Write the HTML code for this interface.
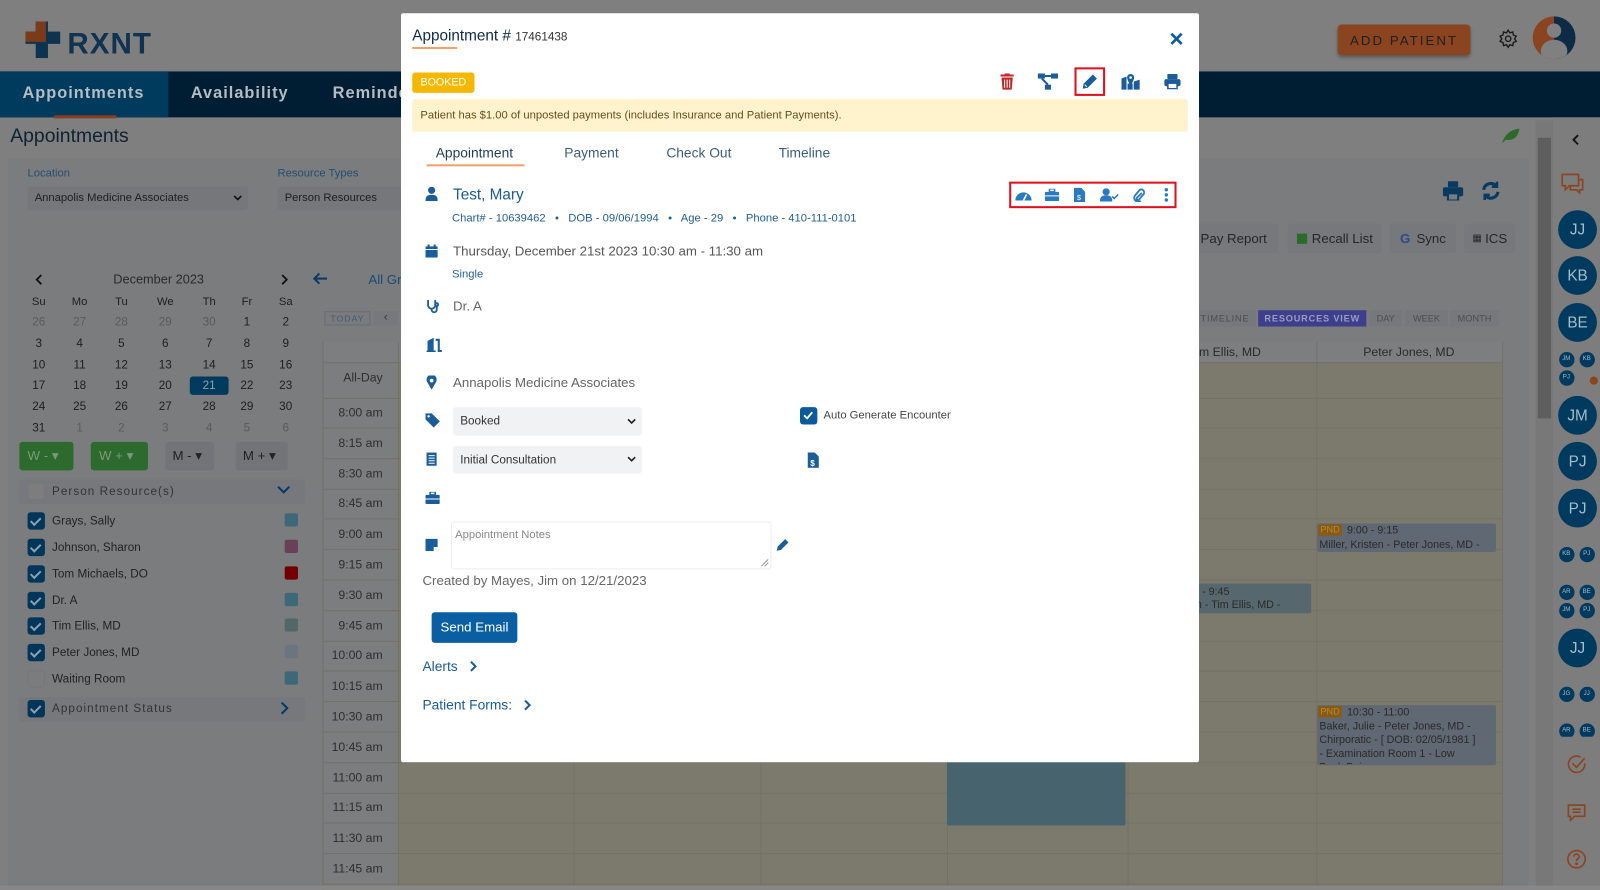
<!DOCTYPE html>
<html><head><meta charset="utf-8">
<style>
*{box-sizing:border-box;margin:0;padding:0}
html,body{width:1600px;height:890px;overflow:hidden;background:#808080;font-family:"Liberation Sans",sans-serif}
#w{position:absolute;left:0;top:0;width:1568px;height:872px;transform:scale(1.020408);transform-origin:0 0;background:#7f7f7f;overflow:hidden}
.a{position:absolute;white-space:nowrap}
.t{position:absolute;white-space:nowrap;transform:translateY(-50%)}
.hl{position:absolute;height:1px;background:#727268}
.vl{position:absolute;width:1px;background:#727268}
.cb{position:absolute;width:17px;height:17px;border-radius:3px;background:#00365a}
.cb:after{content:"";position:absolute;left:5px;top:3px;width:4px;height:8px;border:solid #8aa0b0;border-width:0 2px 2px 0;transform:rotate(45deg)}
.sq{position:absolute;width:13px;height:13px;border-radius:2px;left:279px}
.av{position:absolute;border-radius:50%;background:#003a5e;color:#a8bccb;display:flex;align-items:center;justify-content:center;font-size:15px}
.sav{position:absolute;width:15px;height:15px;border-radius:50%;background:#003a5e;color:#a8bccb;font-size:6px;display:flex;align-items:center;justify-content:center}
.gbtn{position:absolute;background:#76787b;border-radius:3px;color:#262626;font-size:13px;display:flex;align-items:center;justify-content:center}
.mi{position:absolute;transform:translate(-50%,-50%)}
</style></head><body><div id="w">

<svg class="a" style="left:25px;top:21px" width="36" height="36" viewBox="0 0 36 36"><rect x="10" y="0" width="12" height="36" fill="#0e3350"/><rect x="0" y="10" width="34" height="12" fill="#0e3350"/><rect x="10" y="0" width="10" height="20" fill="#7a3b1a"/><rect x="0" y="10" width="20" height="10" fill="#7a3b1a"/></svg>
<div class="t" style="left:66px;top:44px;font-size:29px;font-weight:bold;color:#0f3350;letter-spacing:1px">RXNT</div>
<div class="a" style="left:1311px;top:24px;width:130px;height:30px;background:#8a4420;border-radius:4px;color:#202020;font-size:13px;letter-spacing:2px;display:flex;align-items:center;justify-content:center;box-shadow:0 2px 3px rgba(0,0,0,.3)">ADD PATIENT</div>
<svg class="mi" style="left:1478px;top:38px" width="20" height="20" viewBox="0 0 24 24" fill="none" stroke="#1a1a1a" stroke-width="1.6"><circle cx="12" cy="12" r="3.2"/><path d="M12 2l2 3 3.5-1 .5 3.5 3.5 1.5-2 3 2 3-3.5 1.5-.5 3.5-3.5-1-2 3-2-3-3.5 1-.5-3.5L2.5 15l2-3-2-3L6 7.5 6.5 4 10 5z"/></svg>
<div class="a" style="left:1502px;top:16px;width:42px;height:42px;border-radius:50%;background:linear-gradient(90deg,#8a4420 50%,#0e2a45 50%);overflow:hidden"><div class="a" style="left:14px;top:7px;width:14px;height:14px;border-radius:50%;background:#808080"></div><div class="a" style="left:8px;top:23px;width:26px;height:22px;border-radius:50%;background:#808080"></div></div>

<div class="a" style="left:0;top:70px;width:1568px;height:45px;background:#001e33"></div>
<div class="a" style="left:0;top:70px;width:165px;height:45px;background:#003a5c"></div>
<div class="a" style="left:53px;top:113px;width:61px;height:3px;background:#8a4020"></div>
<div class="t" style="left:22px;top:92px;font-size:16px;font-weight:bold;color:#b5bcc2;letter-spacing:1px">Appointments</div>
<div class="t" style="left:187px;top:92px;font-size:16px;font-weight:bold;color:#b5bcc2;letter-spacing:1px">Availability</div>
<div class="t" style="left:326px;top:92px;font-size:16px;font-weight:bold;color:#b5bcc2;letter-spacing:1px">Reminders</div>

<div class="t" style="left:10px;top:134px;font-size:19px;color:#0f2233">Appointments</div>
<div class="a" style="left:8px;top:155px;width:1490px;height:720px;background:#7b7c7e"></div>

<div class="t" style="left:27px;top:170px;font-size:11px;color:#234e70">Location</div>
<div class="a" style="left:27px;top:183px;width:216px;height:23px;background:#75777a;border-radius:3px"></div>
<div class="t" style="left:34px;top:194px;font-size:11px;color:#1e1e1e">Annapolis Medicine Associates</div>
<svg class="mi" style="left:233px;top:194px" width="9" height="6" viewBox="0 0 9 6" fill="none" stroke="#111" stroke-width="1.6"><path d="M1 1l3.5 3.5L8 1"/></svg>
<div class="t" style="left:272px;top:170px;font-size:11px;color:#234e70">Resource Types</div>
<div class="a" style="left:272px;top:183px;width:130px;height:23px;background:#75777a;border-radius:3px"></div>
<div class="t" style="left:279px;top:194px;font-size:11px;color:#1e1e1e">Person Resources</div>

<svg class="mi" style="left:38px;top:274px" width="7" height="11" viewBox="0 0 7 11" fill="none" stroke="#111" stroke-width="1.8"><path d="M6 1L1.5 5.5 6 10"/></svg>
<svg class="mi" style="left:279px;top:274px" width="7" height="11" viewBox="0 0 7 11" fill="none" stroke="#111" stroke-width="1.8"><path d="M1 1l4.5 4.5L1 10"/></svg>
<div class="t" style="left:111px;top:274px;font-size:12.5px;color:#2a2a2a">December 2023</div>
<div class="a" style="left:186px;top:369px;width:38px;height:18px;background:#003a5c;border-radius:3px"></div>
<div id="cal"></div>

<div class="a" style="left:19px;top:433px;width:53px;height:28px;background:#2d6a2d;border-radius:3px;color:#7a9a7a;font-size:13px;padding:6px 8px">W - ▾</div>
<div class="a" style="left:89px;top:433px;width:56px;height:28px;background:#2d6a2d;border-radius:3px;color:#7a9a7a;font-size:13px;padding:6px 8px">W + ▾</div>
<div class="a" style="left:162px;top:433px;width:48px;height:28px;background:#727477;border-radius:3px;color:#222;font-size:13px;padding:6px 7px">M - ▾</div>
<div class="a" style="left:231px;top:433px;width:51px;height:28px;background:#727477;border-radius:3px;color:#222;font-size:13px;padding:6px 7px">M + ▾</div>

<div class="a" style="left:19px;top:470px;width:280px;height:24px;background:#76787b;border-radius:3px"></div>
<div class="a" style="left:27px;top:473px;width:17px;height:17px;border:1px solid #777;border-radius:3px;background:#7d7d7d"></div>
<div class="t" style="left:51px;top:482px;font-size:11.5px;color:#333;letter-spacing:1px">Person Resource(s)</div>
<svg class="mi" style="left:278px;top:480px" width="13" height="8" viewBox="0 0 13 8" fill="none" stroke="#003a6a" stroke-width="2"><path d="M1 1l5.5 5.5L12 1"/></svg>
<div id="res"></div>
<div class="a" style="left:19px;top:683px;width:280px;height:24px;background:#76787b;border-radius:3px"></div>
<div class="cb" style="left:27px;top:686px"></div>
<div class="t" style="left:51px;top:695px;font-size:11.5px;color:#333;letter-spacing:1px">Appointment Status</div>
<svg class="mi" style="left:279px;top:694px" width="8" height="13" viewBox="0 0 8 13" fill="none" stroke="#003a6a" stroke-width="2"><path d="M1 1l5.5 5.5L1 12"/></svg>

<svg class="mi" style="left:314px;top:273px" width="15" height="12" viewBox="0 0 15 12" fill="none" stroke="#0e3a66" stroke-width="2"><path d="M14 6H2M6.5 1L1.5 6l5 5"/></svg>
<div class="t" style="left:361px;top:274px;font-size:13px;color:#1a4a78">All Groups</div>
<div class="a" style="left:318px;top:305px;width:45px;height:14px;border:1px solid #6a6c70;background:#797b7e;color:#425a70;font-size:8.5px;letter-spacing:1px;text-align:center;line-height:12px">TODAY</div>
<div class="a" style="left:366px;top:305px;width:24px;height:14px;background:#76787b;color:#333;font-size:11px;text-align:center;line-height:13px">‹</div>
<div class="a" style="left:316px;top:335px;width:1156px;height:540px;background:#7c7a6c"></div>
<div class="a" style="left:316px;top:335px;width:74px;height:540px;background:#7c7d7f"></div>
<div class="a" style="left:316px;top:335px;width:1156px;height:20px;background:#7d7e80"></div>
<div id="grid"></div>
<div class="t" style="left:1175px;top:345px;font-size:12px;color:#2a2a2a">m Ellis, MD</div>
<div class="t" style="left:1336px;top:345px;font-size:12px;color:#2a2a2a">Peter Jones, MD</div>

<div class="a" style="left:1291px;top:513px;width:175px;height:28px;background:#5f6873;border-radius:2px"></div>
<div class="a" style="left:1292px;top:514px;width:23px;height:11px;background:#8a5a10;color:#b08a40;font-size:9px;line-height:11px;text-align:center">PND</div>
<div class="t" style="left:1320px;top:520px;font-size:10.5px;color:#2a2a2a">9:00 - 9:15</div>
<div class="t" style="left:1293px;top:534px;font-size:10.5px;color:#2a2a2a">Miller, Kristen - Peter Jones, MD -</div>
<div class="a" style="left:1170px;top:572px;width:115px;height:29px;background:#56676e;border-radius:2px"></div>
<div class="t" style="left:1178px;top:580px;font-size:10.5px;color:#2a2a2a">- 9:45</div>
<div class="t" style="left:1172px;top:593px;font-size:10.5px;color:#2a2a2a">n - Tim Ellis, MD -</div>
<div class="a" style="left:1291px;top:691px;width:175px;height:59px;background:#5f6873;border-radius:2px;overflow:hidden"></div>
<div class="a" style="left:1292px;top:692px;width:23px;height:11px;background:#8a5a10;color:#b08a40;font-size:9px;line-height:11px;text-align:center">PND</div>
<div class="t" style="left:1320px;top:698px;font-size:10.5px;color:#2a2a2a">10:30 - 11:00</div>
<div class="a" style="left:1293px;top:706px;font-size:10.5px;line-height:13.3px;color:#2a2a2a;height:43px;overflow:hidden">Baker, Julie - Peter Jones, MD -<br>Chirporatic - [ DOB: 02/05/1981 ]<br>- Examination Room 1 - Low<br>Back Pain</div>
<div class="a" style="left:928px;top:740px;width:175px;height:69px;background:#46636e;border-radius:2px"></div>

<svg class="mi" style="left:1424px;top:187px" width="20" height="19" viewBox="0 0 20 19" fill="#0a3a60"><rect x="5" y="0" width="10" height="6" rx="1"/><rect x="0" y="6" width="20" height="9" rx="2"/><rect x="5" y="12" width="10" height="7" fill="#7b7c7e" stroke="#0a3a60" stroke-width="2"/></svg>
<svg class="mi" style="left:1461px;top:187px" width="20" height="20" viewBox="0 0 20 20" fill="none" stroke="#0a3a60" stroke-width="3"><path d="M3 9a7 7 0 0 1 12-4M17 11a7 7 0 0 1-12 4"/><path d="M16 1v5h-5M4 19v-5h5" stroke-width="2.5"/></svg>
<svg class="mi" style="left:1480px;top:133px" width="20" height="16" viewBox="0 0 20 16"><path d="M2 15C5 6 11 2 19 1c-1 8-6 12-13 11z" fill="#2a6a2a"/></svg>
<div class="gbtn" style="left:1165px;top:219px;width:88px;height:29px">Pay Report</div>
<div class="gbtn" style="left:1262px;top:219px;width:92px;height:29px"><span style="display:inline-block;width:10px;height:10px;background:#2a6a2a;margin-right:5px"></span>Recall List</div>
<div class="gbtn" style="left:1362px;top:219px;width:65px;height:29px"><b style="color:#2a4a8a;margin-right:6px">G</b>Sync</div>
<div class="gbtn" style="left:1435px;top:219px;width:50px;height:29px"><span style="font-size:10px;margin-right:3px">▦</span>ICS</div>
<div class="a" style="left:1170px;top:304px;width:61px;height:16px;background:#76787b;color:#4a4d52;font-size:9px;letter-spacing:.8px;line-height:16px;text-align:center">TIMELINE</div>
<div class="a" style="left:1233px;top:304px;width:106px;height:16px;background:#3e3f8c;color:#9a9cc0;font-size:9px;letter-spacing:.8px;line-height:16px;text-align:center;font-weight:bold">RESOURCES VIEW</div>
<div class="a" style="left:1342px;top:304px;width:32px;height:16px;background:#76787b;color:#4a4d52;font-size:9px;line-height:16px;text-align:center">DAY</div>
<div class="a" style="left:1377px;top:304px;width:42px;height:16px;background:#76787b;color:#4a4d52;font-size:9px;line-height:16px;text-align:center">WEEK</div>
<div class="a" style="left:1421px;top:304px;width:48px;height:16px;background:#76787b;color:#4a4d52;font-size:9px;line-height:16px;text-align:center">MONTH</div>

<div class="a" style="left:1505px;top:118px;width:17px;height:754px;background:#787878"></div>
<div class="a" style="left:1507px;top:135px;width:13px;height:275px;background:#5e5e5e"></div>
<div class="a" style="left:1522px;top:115px;width:46px;height:757px;background:#7d7d7d"></div>
<svg class="mi" style="left:1544px;top:137px" width="7" height="11" viewBox="0 0 7 11" fill="none" stroke="#111" stroke-width="1.8"><path d="M6 1L1.5 5.5 6 10"/></svg>
<svg class="mi" style="left:1541px;top:180px" width="24" height="22" viewBox="0 0 24 22" fill="none" stroke="#8a4420" stroke-width="1.6"><path d="M2 2h16v11H9l-4 4v-4H2z"/><path d="M18 7h4v10h-3v3l-3-3h-6v-4"/></svg>
<div id="sb"></div>
<svg class="mi" style="left:1545px;top:749px" width="20" height="20" viewBox="0 0 20 20" fill="none" stroke="#8a4420" stroke-width="1.6"><path d="M18 9a8 8 0 1 1-4-6"/><path d="M6 9l4 4 8-9"/></svg>
<svg class="mi" style="left:1545px;top:796px" width="20" height="18" viewBox="0 0 20 18" fill="none" stroke="#8a4420" stroke-width="1.6"><path d="M2 2h16v11H8l-4 4v-4H2z"/><path d="M6 6h8M6 9h8"/></svg>
<svg class="mi" style="left:1545px;top:842px" width="20" height="20" viewBox="0 0 20 20" fill="none" stroke="#8a4420" stroke-width="1.6"><circle cx="10" cy="10" r="8.5"/><path d="M7.5 7.5a2.5 2.5 0 1 1 3.5 2.3c-.8.4-1 1-1 2"/><circle cx="10" cy="14.5" r=".6" fill="#8a4420"/></svg>
<div class="a" style="left:0;top:868px;width:1568px;height:4px;background:#888"></div>

<!-- MODAL -->
<div class="a" style="left:393px;top:13px;width:782px;height:734px;background:#fff;border-radius:2px"></div>
<div class="t" style="left:404px;top:35px;font-size:15px;color:#0e2a47">Appointment # <span style="font-size:11.5px;color:#333">17461438</span></div>
<div class="a" style="left:404px;top:46px;width:44px;height:2px;background:#f4a06a"></div>
<svg class="mi" style="left:1153px;top:38px" width="12" height="12" viewBox="0 0 12 12" fill="none" stroke="#0a5a9c" stroke-width="2.6"><path d="M1 1l10 10M11 1L1 11"/></svg>
<div class="a" style="left:404px;top:71px;width:61px;height:20px;background:#f5b800;border-radius:3px;color:#fff;font-size:10.5px;line-height:20px;text-align:center">BOOKED</div>
<svg class="mi" style="left:987px;top:80px" width="13" height="16" viewBox="0 0 13 16" fill="#c0262c"><rect x="0" y="1" width="13" height="2"/><rect x="4" y="0" width="5" height="2"/><path d="M1 4h11l-1 12H2z"/><path d="M4 6v8M6.5 6v8M9 6v8" stroke="#fff" stroke-width="1"/></svg>
<svg class="mi" style="left:1027px;top:80px" width="20" height="16" viewBox="0 0 20 16" fill="#1a5d9a"><rect x="0" y="0" width="7" height="5"/><rect x="13" y="0" width="7" height="5"/><rect x="7" y="11" width="6" height="5"/><path d="M7 2.5h6M4 5l6 6" stroke="#1a5d9a" stroke-width="2"/></svg>
<div class="a" style="left:1053px;top:66px;width:30px;height:28px;border:2px solid #e0101e"></div>
<svg class="mi" style="left:1068px;top:80px" width="16" height="16" viewBox="0 0 16 16" fill="#1a5d9a"><path d="M11 1l4 4-9 9-5 1 1-5z"/><path d="M3 11l2 2" stroke="#fff" stroke-width="1"/></svg>
<svg class="mi" style="left:1108px;top:80px" width="18" height="16" viewBox="0 0 18 16" fill="#1a5d9a"><path d="M0 5l5-2v13l-5 0zM12 8l6-2v10l-6 0zM6 16V10l5 0v6z"/><circle cx="9" cy="4" r="3.5"/><path d="M9 13L6 6h6z"/><circle cx="9" cy="4" r="1.3" fill="#fff"/></svg>
<svg class="mi" style="left:1149px;top:80px" width="16" height="15" viewBox="0 0 16 15" fill="#1a5d9a"><rect x="3" y="0" width="10" height="5" rx="1"/><rect x="0" y="5" width="16" height="7" rx="2"/><rect x="3.5" y="9" width="9" height="5.5" fill="#fff" stroke="#1a5d9a" stroke-width="1.5"/></svg>
<div class="a" style="left:404px;top:97px;width:760px;height:32px;background:#fff3cd;border-radius:3px"></div>
<div class="t" style="left:412px;top:113px;font-size:11px;color:#614f1e">Patient has $1.00 of unposted payments (includes Insurance and Patient Payments).</div>
<div class="t" style="left:427px;top:150px;font-size:13.5px;color:#1c3d5a">Appointment</div>
<div class="a" style="left:418px;top:161px;width:96px;height:2px;background:#f4a06a"></div>
<div class="t" style="left:553px;top:150px;font-size:13.5px;color:#3a5d7d">Payment</div>
<div class="t" style="left:653px;top:150px;font-size:13.5px;color:#3a5d7d">Check Out</div>
<div class="t" style="left:763px;top:150px;font-size:13.5px;color:#3a5d7d">Timeline</div>
<svg class="mi" style="left:423px;top:190px" width="12" height="14" viewBox="0 0 12 14" fill="#1a5d9a"><circle cx="6" cy="3.5" r="3.5"/><path d="M0 14c0-5 2-6 6-6s6 1 6 6z"/></svg>
<div class="t" style="left:444px;top:191px;font-size:15px;color:#1a5a96">Test, Mary</div>
<div class="a" style="left:989px;top:178px;width:164px;height:26px;border:2px solid #e0101e"></div>
<svg class="mi" style="left:1003px;top:191px" width="16" height="13" viewBox="0 0 16 13" fill="#2a7ac0"><path d="M0 12a8 8 0 0 1 16 0z"/><path d="M8 12l3-6" stroke="#fff" stroke-width="1.5"/></svg>
<svg class="mi" style="left:1031px;top:191px" width="14" height="12" viewBox="0 0 14 12" fill="#2a7ac0"><rect x="0" y="3" width="14" height="9" rx="1"/><rect x="4.5" y="0" width="5" height="3" fill="none" stroke="#2a7ac0" stroke-width="1.5"/><path d="M0 7h14" stroke="#fff"/></svg>
<svg class="mi" style="left:1058px;top:191px" width="11" height="14" viewBox="0 0 11 14" fill="#2a7ac0"><path d="M0 0h7l4 4v10H0z"/><text x="3" y="12" font-size="7" fill="#fff" font-family="Liberation Sans">$</text></svg>
<svg class="mi" style="left:1087px;top:191px" width="18" height="13" viewBox="0 0 18 13" fill="#2a7ac0"><circle cx="6" cy="3.5" r="3.5"/><path d="M0 13c0-5 2-6 6-6s6 1 6 6z"/><path d="M12 8l2 2 4-4" stroke="#2a7ac0" stroke-width="1.5" fill="none"/></svg>
<svg class="mi" style="left:1116px;top:191px" width="12" height="14" viewBox="0 0 12 14" fill="none" stroke="#2a7ac0" stroke-width="1.8"><path d="M9 5L4 10a1.5 1.5 0 0 0 2 2l5-6a3 3 0 0 0-4-4L2 8a4 4 0 0 0 6 5"/></svg>
<svg class="mi" style="left:1143px;top:191px" width="4" height="14" viewBox="0 0 4 14" fill="#2a7ac0"><circle cx="2" cy="2" r="1.7"/><circle cx="2" cy="7" r="1.7"/><circle cx="2" cy="12" r="1.7"/></svg>
<div class="t" style="left:443px;top:214px;font-size:11px;color:#1f5d96">Chart# - 10639462 &nbsp; • &nbsp; DOB - 09/06/1994 &nbsp; • &nbsp; Age - 29 &nbsp; • &nbsp; Phone - 410-111-0101</div>
<svg class="mi" style="left:423px;top:246px" width="12" height="13" viewBox="0 0 12 13" fill="#1a5d9a"><rect x="0" y="2" width="12" height="11" rx="1"/><rect x="2" y="0" width="2" height="3"/><rect x="8" y="0" width="2" height="3"/><path d="M0 5h12" stroke="#fff"/></svg>
<div class="t" style="left:444px;top:246px;font-size:13px;color:#555">Thursday, December 21st 2023 10:30 am - 11:30 am</div>
<div class="t" style="left:443px;top:269px;font-size:11px;color:#1f5d96">Single</div>
<svg class="mi" style="left:424px;top:300px" width="13" height="14" viewBox="0 0 13 14" fill="none" stroke="#1a5d9a" stroke-width="1.8"><path d="M2 1v5a3.5 3.5 0 0 0 7 0V1"/><path d="M5.5 9.5v1a2.5 2.5 0 0 0 5 0V7"/><circle cx="10.5" cy="5.5" r="1.4"/></svg>
<div class="t" style="left:444px;top:300px;font-size:13px;color:#666">Dr. A</div>
<svg class="mi" style="left:426px;top:338px" width="16" height="14" viewBox="0 0 16 14" fill="#1a5d9a"><path d="M1 13V3l6-3v14z"/><path d="M9 2h3v11h3" stroke="#1a5d9a" stroke-width="2" fill="none"/><rect x="0" y="12.5" width="9" height="1.5"/></svg>
<svg class="mi" style="left:423px;top:375px" width="10" height="14" viewBox="0 0 10 14" fill="#1a5d9a"><path d="M5 14L1 7a5 5 0 1 1 8 0z"/><circle cx="5" cy="5" r="1.8" fill="#fff"/></svg>
<div class="t" style="left:444px;top:375px;font-size:13px;color:#666">Annapolis Medicine Associates</div>
<svg class="mi" style="left:424px;top:412px" width="14" height="14" viewBox="0 0 14 14" fill="#1a5d9a"><path d="M0 0h6l8 8-6 6-8-8z"/><circle cx="3" cy="3" r="1.2" fill="#fff"/></svg>
<div class="a" style="left:444px;top:399px;width:185px;height:28px;background:#f1f2f4;border-radius:3px"></div>
<div class="t" style="left:451px;top:413px;font-size:11.5px;color:#333">Booked</div>
<svg class="mi" style="left:619px;top:413px" width="9" height="6" viewBox="0 0 9 6" fill="none" stroke="#222" stroke-width="1.6"><path d="M1 1l3.5 3.5L8 1"/></svg>
<div class="a" style="left:784px;top:399px;width:17px;height:17px;border-radius:3px;background:#0a5a9c"></div>
<svg class="mi" style="left:792px;top:407px" width="10" height="8" viewBox="0 0 10 8" fill="none" stroke="#fff" stroke-width="1.8"><path d="M1 4l3 3 5-6"/></svg>
<div class="t" style="left:807px;top:407px;font-size:11px;color:#444">Auto Generate Encounter</div>
<svg class="mi" style="left:423px;top:450px" width="10" height="13" viewBox="0 0 10 13" fill="#1a5d9a"><rect x="0" y="0" width="10" height="13"/><path d="M2 3h6M2 5.5h6M2 8h6M2 10.5h6" stroke="#fff"/></svg>
<div class="a" style="left:444px;top:437px;width:185px;height:27px;background:#f1f2f4;border-radius:3px"></div>
<div class="t" style="left:451px;top:451px;font-size:11.5px;color:#333">Initial Consultation</div>
<svg class="mi" style="left:619px;top:450px" width="9" height="6" viewBox="0 0 9 6" fill="none" stroke="#222" stroke-width="1.6"><path d="M1 1l3.5 3.5L8 1"/></svg>
<svg class="mi" style="left:797px;top:451px" width="11" height="15" viewBox="0 0 11 15" fill="#1a5d9a"><path d="M0 0h7l4 4v11H0z"/><text x="2.5" y="13" font-size="8" fill="#fff" font-weight="bold" font-family="Liberation Sans">$</text></svg>
<svg class="mi" style="left:424px;top:488px" width="14" height="12" viewBox="0 0 14 12" fill="#1a5d9a"><rect x="0" y="3" width="14" height="9" rx="1"/><rect x="4.5" y="0" width="5" height="3" fill="none" stroke="#1a5d9a" stroke-width="1.5"/><path d="M0 7h14" stroke="#fff"/></svg>
<svg class="mi" style="left:423px;top:534px" width="12" height="12" viewBox="0 0 12 12" fill="#1a5d9a"><path d="M0 0h12v8l-4 4H0z"/><path d="M8 12V8h4" fill="#fff"/></svg>
<div class="a" style="left:442px;top:511px;width:314px;height:47px;border:1px solid #eceef0;border-radius:3px"></div>
<div class="t" style="left:446px;top:524px;font-size:11px;color:#888">Appointment Notes</div>
<div class="a" style="left:746px;top:548px;width:7px;height:7px;background:linear-gradient(135deg,transparent 45%,#999 45%,#999 55%,transparent 55%,transparent 70%,#999 70%,#999 80%,transparent 80%)"></div>
<svg class="mi" style="left:767px;top:534px" width="13" height="13" viewBox="0 0 16 16" fill="#1a5d9a"><path d="M11 1l4 4-9 9-5 1 1-5z"/></svg>
<div class="t" style="left:414px;top:569px;font-size:13px;color:#666">Created by Mayes, Jim on 12/21/2023</div>
<div class="a" style="left:423px;top:600px;width:84px;height:30px;background:#0a5fa3;border-radius:3px;color:#fff;font-size:13px;line-height:30px;text-align:center">Send Email</div>
<div class="t" style="left:414px;top:653px;font-size:13.5px;color:#1a5a96">Alerts</div>
<svg class="mi" style="left:464px;top:653px" width="7" height="11" viewBox="0 0 7 11" fill="none" stroke="#1a5a96" stroke-width="2"><path d="M1 1l4.5 4.5L1 10"/></svg>
<div class="t" style="left:414px;top:691px;font-size:13.5px;color:#1a5a96">Patient Forms:</div>
<svg class="mi" style="left:517px;top:691px" width="7" height="11" viewBox="0 0 7 11" fill="none" stroke="#1a5a96" stroke-width="2"><path d="M1 1l4.5 4.5L1 10"/></svg>

</div>
<script>
(function(){
var cols=[38,78,119,162,205,242,280],hd=['Su','Mo','Tu','We','Th','Fr','Sa'];
var cal='';
hd.forEach(function(d,i){cal+='<div class="t" style="left:'+cols[i]+'px;top:296px;font-size:11px;color:#1e1e1e;transform:translate(-50%,-50%)">'+d+'</div>';});
var rows=[316,337,358,378,399,420];
var days=[[26,27,28,29,30,1,2],[3,4,5,6,7,8,9],[10,11,12,13,14,15,16],[17,18,19,20,21,22,23],[24,25,26,27,28,29,30],[31,1,2,3,4,5,6]];
days.forEach(function(r,ri){r.forEach(function(d,ci){var muted=(ri==0&&ci<5)||(ri==5&&ci>0);var c=muted?'#5a5a5a':'#1e1e1e';if(ri==3&&ci==4)c='#8fa2b0';cal+='<div class="t" style="left:'+cols[ci]+'px;top:'+rows[ri]+'px;font-size:11.5px;color:'+c+';transform:translate(-50%,-50%)">'+d+'</div>';});});
document.getElementById('cal').outerHTML=cal;
var res=[['Grays, Sally','#3e6878',1],['Johnson, Sharon','#6a4058',1],['Tom Michaels, DO','#720000',1],['Dr. A','#3e6878',1],['Tim Ellis, MD','#526868',1],['Peter Jones, MD','#6a7580',1],['Waiting Room','#3e6878',0]];
var ry=[511,537,563,589,614,640,666],h='';
res.forEach(function(r,i){h+=(r[2]?'<div class="cb" style="left:27px;top:'+(ry[i]-9)+'px"></div>':'<div class="a" style="left:27px;top:'+(ry[i]-9)+'px;width:17px;height:17px;border:1px solid #777;border-radius:3px"></div>')+'<div class="t" style="left:51px;top:'+ry[i]+'px;font-size:11.5px;color:#222">'+r[0]+'</div><div class="sq" style="top:'+(ry[i]-8)+'px;background:'+r[1]+'"></div>';});
document.getElementById('res').outerHTML=h;
var g='';
var times=['8:00 am','8:15 am','8:30 am','8:45 am','9:00 am','9:15 am','9:30 am','9:45 am','10:00 am','10:15 am','10:30 am','10:45 am','11:00 am','11:15 am','11:30 am','11:45 am'];
g+='<div class="t" style="left:316px;width:59px;text-align:right;top:370px;font-size:12px;color:#2e2e2e">All-Day</div>';
g+='<div class="hl" style="left:316px;width:1156px;top:355px"></div><div class="hl" style="left:316px;width:1156px;top:390px"></div>';
times.forEach(function(t,i){var y=404+i*29.8;g+='<div class="t" style="left:316px;width:59px;text-align:right;top:'+y+'px;font-size:12px;color:#2e2e2e">'+t+'</div>';g+='<div class="hl" style="left:316px;width:1156px;top:'+Math.round(y+15)+'px"></div>';});
[316,390,562,745,928,1105,1290,1472].forEach(function(x){g+='<div class="vl" style="left:'+x+'px;top:335px;height:540px"></div>';});
document.getElementById('grid').outerHTML=g;
var s='';
[['JJ',225],['KB',270],['BE',316],['JM',407],['PJ',452],['PJ',498],['JJ',635]].forEach(function(a){s+='<div class="av" style="left:1527px;top:'+(a[1]-19)+'px;width:38px;height:38px">'+a[0]+'</div>';});
[['JM',1535,352],['KB',1555,352],['PJ',1535,370],['KB',1535,543],['PJ',1555,543],['AR',1535,580],['BE',1555,580],['JM',1535,598],['PJ',1555,598],['JG',1535,680],['JJ',1555,680],['AR',1535,716],['BE',1555,716]].forEach(function(a){s+='<div class="sav" style="left:'+(a[1]-7.5)+'px;top:'+(a[2]-7.5)+'px">'+a[0]+'</div>';});
s+='<div class="a" style="left:1558px;top:369px;width:8px;height:8px;border-radius:50%;background:#8a4420"></div>';
s+='<div class="a" style="left:1522px;top:722px;width:46px;height:10px;background:#7d7d7d"></div>';
document.getElementById('sb').outerHTML=s;
})();
</script>
</body></html>
